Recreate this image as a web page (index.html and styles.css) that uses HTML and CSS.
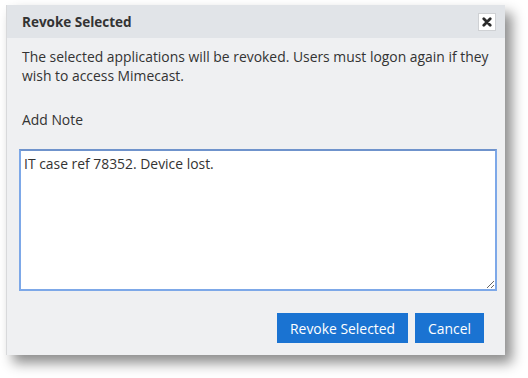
FILE: index.html
```html
<!DOCTYPE html>
<html>
<head>
    <title>Revoke Selected</title>
    <link rel="stylesheet" href="styles.css">
</head>
<body>
    <!-- Revoke dialog -->
    <div class="dialog">
        <div class="dialog-header">
            <span class="dialog-title">Revoke Selected</span>
            <button class="close-btn" aria-label="Close">
                <svg width="10" height="10" viewBox="0 0 10 10">
                    <path d="M1.8 1.8 L8.2 8.2 M8.2 1.8 L1.8 8.2" stroke="#2b2b2b" stroke-width="2.8" stroke-linecap="round"/>
                </svg>
            </button>
        </div>

        <div class="dialog-body">
            <p class="dialog-text">The selected applications will be revoked. Users must logon again if they wish to access Mimecast.</p>
            <label class="note-label" for="note">Add Note</label>
            <textarea id="note" class="note-input">IT case ref 78352. Device lost.</textarea>
        </div>

        <div class="dialog-footer">
            <button class="btn-primary">Revoke Selected</button>
            <button class="btn-primary">Cancel</button>
        </div>
    </div>
</body>
</html>
```

FILE: styles.css
```css
/* Page */
body {
    margin: 0;
    padding: 5px 0 23px 6px;
    background-color: #fff;
    font-family: "Open Sans", Arial, sans-serif;
    font-size: 13.9px;
    color: #333;
}

/* Dialog box */
.dialog {
    width: 499px;
    height: 350px;
    background-color: #eff0f2;
    border-left: 1px solid #d8d9db;
    box-sizing: border-box;
    box-shadow: 7px 8px 12px rgba(0, 0, 0, 0.45);
    display: flex;
    flex-direction: column;
}

.dialog-header {
    height: 33px;
    background-color: #e1e4e8;
    display: flex;
    align-items: center;
    justify-content: space-between;
    padding: 0 9px 0 15px;
}

.dialog-title {
    font-weight: bold;
    font-size: 13.5px;
    color: #333;
}

.close-btn {
    width: 18px;
    height: 18px;
    padding: 0;
    border: 1px solid #cfd1d4;
    background-color: #fff;
    display: flex;
    align-items: center;
    justify-content: center;
    cursor: pointer;
}

.dialog-body {
    padding: 9px 8px 0 12px;
    display: flex;
    flex-direction: column;
}

.dialog-text {
    margin: 0 0 25px;
    padding-left: 3px;
    line-height: 19px;
}

.note-label {
    padding-left: 3px;
    line-height: 19px;
    margin-bottom: 20px;
}

.note-input {
    height: 142px;
    box-sizing: border-box;
    border: 2px solid #7da8e8;
    border-top-color: #6f93cc;
    padding: 3px 3px;
    font-family: "Open Sans", Arial, sans-serif;
    font-size: 13.9px;
    line-height: 19px;
    color: #333;
    background-color: #fff;
    outline: none;
}

.dialog-footer {
    margin-top: 22px;
    padding-right: 21px;
    display: flex;
    justify-content: flex-end;
    gap: 7px;
}

.btn-primary {
    height: 30px;
    padding: 0 13px;
    background-color: #1a73d2;
    color: #fff;
    border: none;
    font-family: "Open Sans", Arial, sans-serif;
    font-size: 13.9px;
    cursor: pointer;
}
```
